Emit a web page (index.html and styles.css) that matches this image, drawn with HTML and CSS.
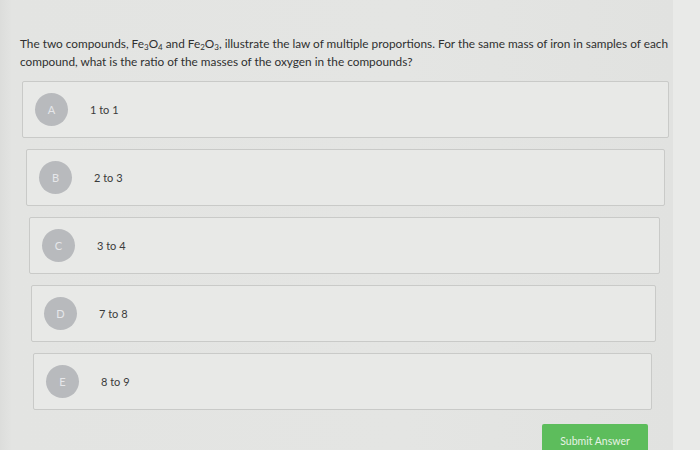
FILE: index.html
```html
<!DOCTYPE html>
<html lang="en">
<head>
    <meta charset="UTF-8">
    <meta name="viewport" content="width=device-width, initial-scale=1.0">
    <title>Question</title>
    <link rel="stylesheet" href="styles.css">
</head>
<body>
    <div class="screen">
        <p class="question">
            The two compounds, Fe<sub>3</sub>O<sub>4</sub> and Fe<sub>2</sub>O<sub>3</sub>, illustrate the law of multiple proportions. For the same mass of iron in samples of each compound, what is the ratio of the masses of the oxygen in the compounds?
        </p>

        <div class="options">
            <label class="option opt-a">
                <span class="letter">A</span>
                <span class="answer">1 to 1</span>
            </label>
            <label class="option opt-b">
                <span class="letter">B</span>
                <span class="answer">2 to 3</span>
            </label>
            <label class="option opt-c">
                <span class="letter">C</span>
                <span class="answer">3 to 4</span>
            </label>
            <label class="option opt-d">
                <span class="letter">D</span>
                <span class="answer">7 to 8</span>
            </label>
            <label class="option opt-e">
                <span class="letter">E</span>
                <span class="answer">8 to 9</span>
            </label>
        </div>

        <div class="actions">
            <button type="button" class="submit">Submit Answer</button>
        </div>
    </div>
</body>
</html>
```

FILE: styles.css
```css
body {
    margin: 0;
    font-family: Lato, "Open Sans", sans-serif;
    background-color: #e9eae8;
    color: #2f3030;
    overflow: hidden;
}
.screen {
    width: 673px;
    height: 450px;
    padding: 35px 0 0 0;
    box-sizing: border-box;
    background: linear-gradient(to right, #dcdddb 0, #e3e4e2 12px, #e4e5e3 60%, #e1e2e0 100%);
}
.question {
    margin: 0 0 0 20px;
    width: 660px;
    font-size: 11.8px;
    line-height: 18px;
}
.question sub {
    font-size: 8px;
    line-height: 0;
    vertical-align: -2px;
}
.options {
    display: flex;
    flex-direction: column;
    gap: 11px;
    margin-top: 10px;
}
.option {
    display: flex;
    align-items: center;
    height: 57px;
    box-sizing: border-box;
    border: 1px solid #c9cac8;
    border-radius: 2px;
    background-color: #e8e9e7;
    padding-left: 12px;
}
.opt-a { margin: 0 4px 0 22px; }
.opt-b { margin: 0 8px 0 26px; }
.opt-c { margin: 0 13px 0 29px; }
.opt-d { margin: 0 17px 0 31px; }
.opt-e { margin: 0 21px 0 33px; }
.letter {
    width: 33px;
    height: 33px;
    border-radius: 50%;
    background-color: #b8babd;
    color: #e6e7ea;
    font-size: 11px;
    display: flex;
    align-items: center;
    justify-content: center;
    flex-shrink: 0;
}
.answer {
    margin-left: 22px;
    font-size: 11px;
    color: #3a3b3b;
}
.actions {
    display: flex;
    justify-content: flex-end;
    margin-top: 14px;
    padding-right: 25px;
}
.submit {
    width: 106px;
    height: 32px;
    border: none;
    border-radius: 2px;
    background-color: #5dbd5c;
    color: #e6f3e4;
    font-family: Lato, "Open Sans", sans-serif;
    font-size: 10.5px;
    padding-top: 2px;
}
```
